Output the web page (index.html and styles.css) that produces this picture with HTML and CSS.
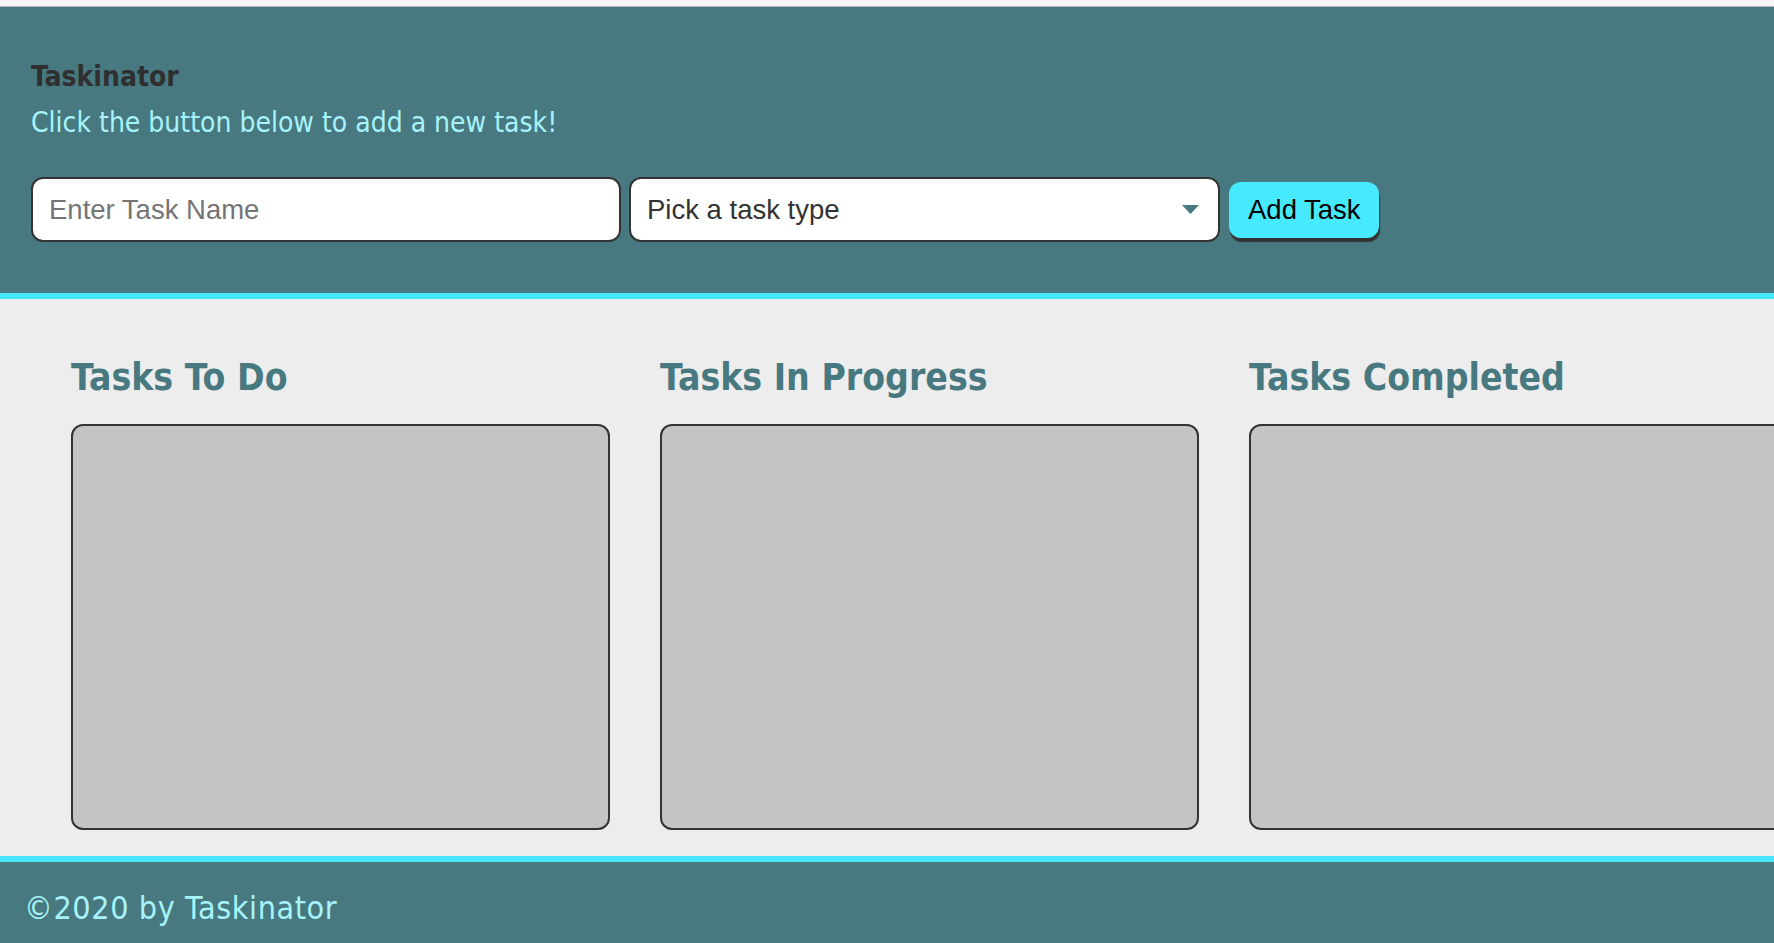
FILE: index.html
```html
<!DOCTYPE html>
<html lang="en">
<head>
 <meta charset="UTF-8">
 <title>Taskinator</title>
 <link rel="stylesheet" href="styles.css">
</head>
<body>
<div class="top-strip"></div>
<header class="header">
 <h1 class="page-title">Taskinator</h1>
 <p class="page-intro">Click the button below to add a new task!</p>
 <form class="task-form">
  <input type="text" class="text-input" name="task-name" placeholder="Enter Task Name">
  <div class="select-wrap">
   <select class="select-input" name="task-type">
    <option value="" selected>Pick a task type</option>
    <option value="Web">Web</option>
    <option value="Mobile">Mobile</option>
    <option value="Print">Print</option>
   </select>
   <svg class="select-arrow" width="17" height="9" viewBox="0 0 17 9"><path d="M0 0 H17 L8.5 9 Z" fill="#487980"/></svg>
  </div>
  <button type="button" class="btn">Add Task</button>
 </form>
</header>
<main class="page-content">
 <section class="task-list-wrapper">
  <h2 class="list-title">Tasks To Do</h2>
  <ul class="task-list" id="tasks-to-do"></ul>
 </section>
 <section class="task-list-wrapper">
  <h2 class="list-title">Tasks In Progress</h2>
  <ul class="task-list" id="tasks-in-progress"></ul>
 </section>
 <section class="task-list-wrapper">
  <h2 class="list-title">Tasks Completed</h2>
  <ul class="task-list" id="tasks-completed"></ul>
 </section>
</main>
<footer class="footer">
 <p>&copy;2020 by Taskinator</p>
</footer>
</body>
</html>
```

FILE: styles.css
```css
html, body {
 margin: 0;
 padding: 0;
 overflow: hidden; /* third column runs off the right edge */
 }
body {
 font-family: "DejaVu Sans Condensed", "DejaVu Sans", Verdana, sans-serif;
 background-color: #ededed;
 }
.top-strip {
 height: 6px;
 background-color: #f6f6f6;
 border-bottom: 1px solid #b9b9b9;
 }
.header {
 background-color: #487980;
 padding: 54px 31px 51px;
 border-bottom: 6px solid #46e6fc;
 }
.page-title {
 margin: 0;
 font-size: 28px;
 line-height: 32px;
 font-weight: bold;
 color: #2f2f2f;
 }
.page-intro {
 margin: 14px 0 0;
 font-size: 28px;
 line-height: 32px;
 color: #a7f3fa;
 }
.task-form {
 display: flex;
 align-items: center;
 gap: 8px;
 margin-top: 38px;
 }
.text-input,
.select-input {
 width: 590px;
 height: 65px;
 box-sizing: border-box;
 border: 2px solid #333;
 border-radius: 12px;
 background-color: #fff;
 padding: 0 16px;
 font-family: "Liberation Sans", Arial, sans-serif;
 font-size: 27.5px;
 color: #333;
 outline: none;
 }
.text-input::placeholder {
 color: #757575;
 }
.select-wrap {
 position: relative;
 }
.select-input {
 display: block;
 appearance: none;
 -webkit-appearance: none;
 width: 591px;
 }
/* custom arrow sitting over the select */
.select-arrow {
 position: absolute;
 right: 21px;
 top: 28px;
 pointer-events: none;
 }
.btn {
 height: 56px;
 padding: 0 18px 0 19px;
 margin-left: 1px;
 font-family: "Liberation Sans", Arial, sans-serif;
 font-size: 27.5px;
 color: #000;
 background-color: #46e9fd;
 border: none;
 border-radius: 12px;
 box-shadow: 1px 4px 1px #333;
 cursor: pointer;
 }
.page-content {
 display: flex;
 gap: 50px;
 padding: 59px 0 26px 71px;
 }
.task-list-wrapper {
 flex: 0 0 539px;
 }
.list-title {
 margin: 0 0 26px;
 font-size: 37px;
 line-height: 40px;
 font-weight: bold;
 color: #487980;
 }
.task-list {
 list-style: none;
 margin: 0;
 padding: 0;
 height: 406px;
 box-sizing: border-box;
 background-color: #c4c4c4;
 border: 2px solid #333;
 border-radius: 12px;
 }
.footer {
 background-color: #487980;
 border-top: 6px solid #46e6fc;
 padding: 28px 24px 40px;
 }
.footer p {
 margin: 0;
 font-size: 32px;
 line-height: 36px;
 letter-spacing: 0.6px;
 color: #a7f3fa;
 }
```
